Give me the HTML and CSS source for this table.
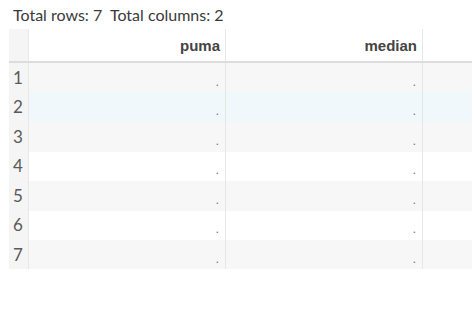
FILE: index.html
```html
<!DOCTYPE html>
<html>
<head>
<meta charset="utf-8">
<link rel="stylesheet" href="styles.css">
</head>
<body>
<div class="wrap">
  <div class="summary">Total rows: 7&nbsp; Total columns: 2</div>
  <div class="grid">
    <div class="row head">
      <div class="idx"></div>
      <div class="cell hcell">puma</div>
      <div class="cell hcell">median</div>
      <div class="cell filler"></div>
    </div>
    <div class="row odd"><div class="idx">1</div><div class="cell">.</div><div class="cell">.</div><div class="cell filler"></div></div>
    <div class="row hover"><div class="idx">2</div><div class="cell">.</div><div class="cell">.</div><div class="cell filler"></div></div>
    <div class="row odd"><div class="idx">3</div><div class="cell">.</div><div class="cell">.</div><div class="cell filler"></div></div>
    <div class="row"><div class="idx">4</div><div class="cell">.</div><div class="cell">.</div><div class="cell filler"></div></div>
    <div class="row odd"><div class="idx">5</div><div class="cell">.</div><div class="cell">.</div><div class="cell filler"></div></div>
    <div class="row"><div class="idx">6</div><div class="cell">.</div><div class="cell">.</div><div class="cell filler"></div></div>
    <div class="row odd"><div class="idx">7</div><div class="cell">.</div><div class="cell">.</div><div class="cell filler"></div></div>
  </div>
</div>
</body>
</html>
```

FILE: styles.css
```css
html, body {
  margin: 0;
  padding: 0;
  background: #ffffff;
}
.wrap {
  padding: 5px 2px 0 9px;
}
.summary {
  font-family: Lato, "Open Sans", sans-serif;
  font-weight: 400;
  font-size: 16px;
  line-height: 20px;
  color: #3a3a3a;
  padding-left: 4px;
  height: 24px;
}
.grid {
  width: 463px;
}
.row {
  display: grid;
  grid-template-columns: 20px 197px 197px 49px;
  height: 29.43px;
}
.row.head {
  height: 32px;
  border-bottom: 2px solid #dcdcdc;
}
.row.odd .cell { background: #f7f7f7; }
.row.hover .cell { background: #f1f8fc; }
.idx {
  background: #f5f5f5;
  border-right: 1px solid #e8e8e8;
  font-family: Lato, "Open Sans", sans-serif;
  font-weight: 400;
  font-size: 17px;
  color: #5a5a5a;
  padding-left: 4px;
  line-height: 30px;
}
.cell {
  border-right: 1px solid #e6e6e6;
  text-align: right;
  padding-right: 6px;
  font-family: "Liberation Sans", Arial, sans-serif;
  font-size: 13px;
  color: #777777;
  display: flex;
  align-items: flex-end;
  justify-content: flex-end;
  padding-bottom: 4px;
  line-height: 14px;
}
.cell.hcell {
  font-weight: 700;
  font-size: 15px;
  color: #444444;
  align-items: center;
  padding-bottom: 0;
  padding-right: 5px;
  padding-top: 2px;
}
.cell.filler {
  border-right: none;
}
```
